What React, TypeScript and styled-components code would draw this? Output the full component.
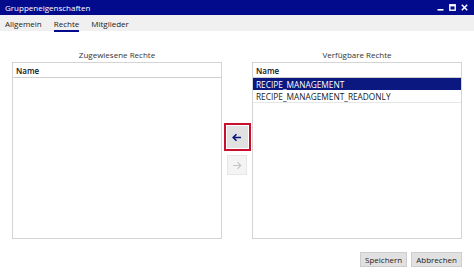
import React, { useState } from 'react';
import styled, { createGlobalStyle } from 'styled-components';

const GlobalStyle = createGlobalStyle`
    html, body {
        margin: 0;
        padding: 0;
        background: #ffffff;
    }
    body {
        font-family: 'Open Sans', 'Noto Sans', sans-serif;
        font-size: 8px;
        color: #1a1a1a;
    }
`;

const Window = styled.div`
    width: 474px;
    height: 280px;
    display: flex;
    flex-direction: column;
    overflow: hidden;
`;

const TitleBar = styled.div`
    height: 15px;
    flex: none;
    background: #020b8c;
    color: #ffffff;
    display: flex;
    align-items: center;
    justify-content: space-between;
    padding: 0 6px 0 5px;
    font-size: 8px;
`;

const WindowControls = styled.div`
    display: flex;
    align-items: center;
    gap: 5px;
`;

const TabBar = styled.div`
    height: 16px;
    flex: none;
    background: #f0f0f0;
    display: flex;
    align-items: center;
    gap: 12px;
    padding: 0 5px;
`;

const Tab = styled.div<{ $active?: boolean }>`
    position: relative;
    font-size: 8px;
    color: #222;
    cursor: pointer;

    &::after {
        content: '';
        display: ${({ $active }) => ($active ? 'block' : 'none')};
        position: absolute;
        left: 0;
        right: 0;
        bottom: -3px;
        height: 1.5px;
        background: #020b8c;
    }
`;

const Content = styled.div`
    flex: 1;
    display: flex;
    flex-direction: column;
    padding: 18px 12px 0 12px;
`;

const Columns = styled.div`
    display: grid;
    grid-template-columns: 1fr 30px 1fr;
`;

const Column = styled.div`
    display: flex;
    flex-direction: column;
`;

const ColumnLabel = styled.div`
    text-align: center;
    font-size: 8px;
    color: #333;
    height: 13px;
`;

const ListBox = styled.div`
    height: 177px;
    box-sizing: border-box;
    border: 1px solid #d4d4d4;
    background: #fff;
    display: flex;
    flex-direction: column;
`;

const ListHeader = styled.div`
    height: 14px;
    flex: none;
    border-bottom: 1px solid #cfcfcf;
    display: flex;
    align-items: center;
    padding: 0 3px;
    font-weight: 600;
    font-size: 8px;
    color: #111;
`;

const ListRow = styled.div<{ $selected?: boolean }>`
    height: 12px;
    flex: none;
    display: flex;
    align-items: center;
    padding: 0 3px;
    font-size: 8.3px;
    background: ${({ $selected }) => ($selected ? '#0a1880' : 'transparent')};
    color: ${({ $selected }) => ($selected ? '#ffffff' : '#222')};
    border-bottom: ${({ $selected }) => ($selected ? 'none' : '1px solid #e6e6e6')};
    cursor: pointer;
`;

const MiddleColumn = styled.div`
    display: flex;
    flex-direction: column;
    align-items: center;
    padding-top: 74px;
    gap: 4px;
`;

const ArrowButton = styled.button<{ $focused?: boolean }>`
    width: ${({ $focused }) => ($focused ? '27px' : '20px')};
    height: ${({ $focused }) => ($focused ? '28px' : '20px')};
    padding: 0;
    display: flex;
    align-items: center;
    justify-content: center;
    background: ${({ $focused }) => ($focused ? '#e1e1e1' : '#f4f4f4')};
    border: ${({ $focused }) => ($focused ? '2px solid #c8102e' : '1px solid #e6e6e6')};
    box-shadow: ${({ $focused }) => ($focused ? 'inset 0 0 0 1px #ffffff' : 'none')};
    cursor: ${({ disabled }) => (disabled ? 'default' : 'pointer')};
`;

const Footer = styled.div`
    display: flex;
    justify-content: flex-end;
    gap: 4px;
    padding-top: 13px;
`;

const DialogButton = styled.button`
    height: 15px;
    min-width: 44px;
    padding: 0 4px;
    font-family: inherit;
    font-size: 8px;
    color: #222;
    background: #e1e1e1;
    border: 1px solid #cdcdcd;
    cursor: pointer;
`;

const Arrow = ({ dir, color }: { dir: 'left' | 'right'; color: string }) => (
    <svg width="10" height="9" viewBox="0 0 10 9">
        {dir === 'left' ? (
            <path d="M9 4.5H1.5M4.5 1.2L1.2 4.5 4.5 7.8" stroke={color} strokeWidth="1.6" fill="none" />
        ) : (
            <path d="M1 4.5h7.5M5.5 1.2l3.3 3.3-3.3 3.3" stroke={color} strokeWidth="1.2" fill="none" />
        )}
    </svg>
);

const TABS = ['Allgemein', 'Rechte', 'Mitglieder'];
const AVAILABLE = ['RECIPE_MANAGEMENT', 'RECIPE_MANAGEMENT_READONLY'];

export default function App() {
    const [tab, setTab] = useState('Rechte');
    const [selected, setSelected] = useState('RECIPE_MANAGEMENT');

    return (
        <Window>
            <GlobalStyle />
            <TitleBar>
                <span>Gruppeneigenschaften</span>
                <WindowControls>
                    <svg width="7" height="7" viewBox="0 0 7 7">
                        <rect x="0.5" y="5" width="6" height="1.6" fill="#fff" />
                    </svg>
                    <svg width="7" height="7" viewBox="0 0 7 7">
                        <rect x="0.8" y="0.8" width="5.4" height="5.4" fill="none" stroke="#fff" strokeWidth="1.4" />
                        <rect x="0.8" y="0.8" width="5.4" height="1.6" fill="#fff" />
                    </svg>
                    <svg width="7" height="7" viewBox="0 0 7 7">
                        <path d="M0.8 0.8l5.4 5.4M6.2 0.8L0.8 6.2" stroke="#fff" strokeWidth="1.5" />
                    </svg>
                </WindowControls>
            </TitleBar>
            <TabBar>
                {TABS.map(t => (
                    <Tab key={t} $active={t === tab} onClick={() => setTab(t)}>
                        {t}
                    </Tab>
                ))}
            </TabBar>
            <Content>
                <Columns>
                    <Column>
                        <ColumnLabel>Zugewiesene Rechte</ColumnLabel>
                        <ListBox>
                            <ListHeader>Name</ListHeader>
                        </ListBox>
                    </Column>
                    <MiddleColumn>
                        <ArrowButton $focused>
                            <Arrow dir="left" color="#0a1880" />
                        </ArrowButton>
                        <ArrowButton disabled>
                            <Arrow dir="right" color="#c4c4c4" />
                        </ArrowButton>
                    </MiddleColumn>
                    <Column>
                        <ColumnLabel>Verfügbare Rechte</ColumnLabel>
                        <ListBox>
                            <ListHeader>Name</ListHeader>
                            {AVAILABLE.map(item => (
                                <ListRow
                                    key={item}
                                    $selected={item === selected}
                                    onClick={() => setSelected(item)}
                                >
                                    {item}
                                </ListRow>
                            ))}
                        </ListBox>
                    </Column>
                </Columns>
                <Footer>
                    <DialogButton>Speichern</DialogButton>
                    <DialogButton>Abbrechen</DialogButton>
                </Footer>
            </Content>
        </Window>
    );
}
